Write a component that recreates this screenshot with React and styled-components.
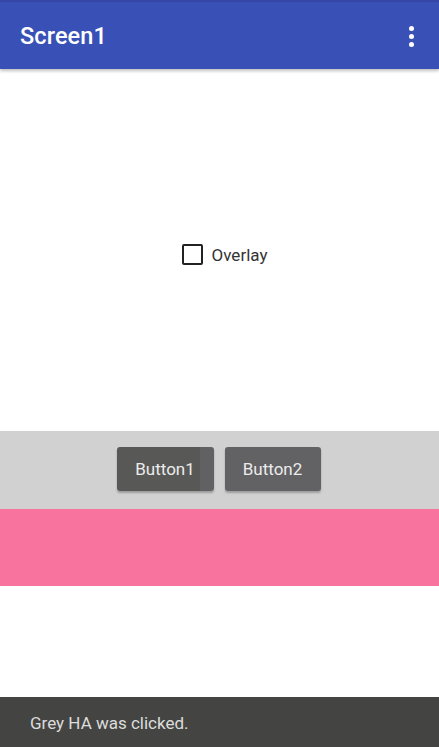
import React from "react";
import styled, { createGlobalStyle } from "styled-components";

const Global = createGlobalStyle`
  html, body { margin: 0; padding: 0; background: #fff; }
  body { font-family: Roboto, "Noto Sans", Arial, sans-serif; }
  * { box-sizing: border-box; }
`;

const Screen = styled.div`
  width: 439px;
  height: 747px;
  display: flex;
  flex-direction: column;
  position: relative;
  overflow: hidden;
  background: #fff;
`;

const AppBar = styled.header`
  height: 69px;
  flex: 0 0 69px;
  background: #3951b6;
  border-top: 2px solid #3446a6;
  display: flex;
  align-items: center;
  justify-content: space-between;
  padding: 0 20px 0 20px;
  box-shadow: 0 2px 3px rgba(0,0,0,0.25);
  position: relative;
  z-index: 2;
`;

const Title = styled.h1`
  margin: 0;
  margin-top: 1px;
  font-size: 23.5px;
  font-weight: 500;
  color: #fff;
  letter-spacing: 0.1px;
`;

const MenuDots = styled.div`
  display: flex;
  flex-direction: column;
  gap: 3px;
  margin-right: 5px;
  margin-top: 1px;
  span {
    width: 5px;
    height: 5px;
    border-radius: 50%;
    background: #fff;
  }
`;

const Canvas = styled.main`
  flex: 0 0 362px;
  display: flex;
  align-items: center;
  justify-content: center;
  padding-top: 9px;
  padding-left: 10px;
`;

const CheckRow = styled.label`
  display: flex;
  align-items: center;
  gap: 9px;
  font-size: 17px;
  color: #333;
`;

const Box = styled.span`
  width: 21px;
  height: 21px;
  border: 2px solid #222;
  border-radius: 2px;
`;

const ButtonBar = styled.section`
  flex: 0 0 78px;
  background: #d1d1d1;
  display: flex;
  justify-content: center;
  align-items: center;
  gap: 11px;
  padding-bottom: 3px;
  padding-right: 2px;
`;

const Btn = styled.button`
  width: ${p => p.$w}px;
  height: 44px;
  border: none;
  border-radius: 3px;
  background: ${p => p.$pressed
    ? "linear-gradient(90deg, #585957 0, #585957 86%, #616062 86%)"
    : "#626163"};
  color: #ececec;
  font-family: Roboto, Arial, sans-serif;
  font-size: 17px;
  box-shadow: 0 2px 2px rgba(0,0,0,0.25);
  padding: 0;
`;

const PinkBand = styled.section`
  flex: 0 0 77px;
  background: #f8739e;
`;

const Spacer = styled.div`
  flex: 1;
`;

const Snackbar = styled.div`
  flex: 0 0 50px;
  background: #444543;
  color: #dcdcdc;
  font-size: 17px;
  display: flex;
  align-items: center;
  padding-left: 30px;
  padding-top: 1px;
`;

export default function App() {
  return (
    <>
      <Global />
      <Screen>
        <AppBar>
          <Title>Screen1</Title>
          <MenuDots><span /><span /><span /></MenuDots>
        </AppBar>
        <Canvas>
          <CheckRow><Box />Overlay</CheckRow>
        </Canvas>
        <ButtonBar>
          <Btn $w={97} $pressed>Button1</Btn>
          <Btn $w={96}>Button2</Btn>
        </ButtonBar>
        <PinkBand />
        <Spacer />
        <Snackbar>Grey HA was clicked.</Snackbar>
      </Screen>
    </>
  );
}
